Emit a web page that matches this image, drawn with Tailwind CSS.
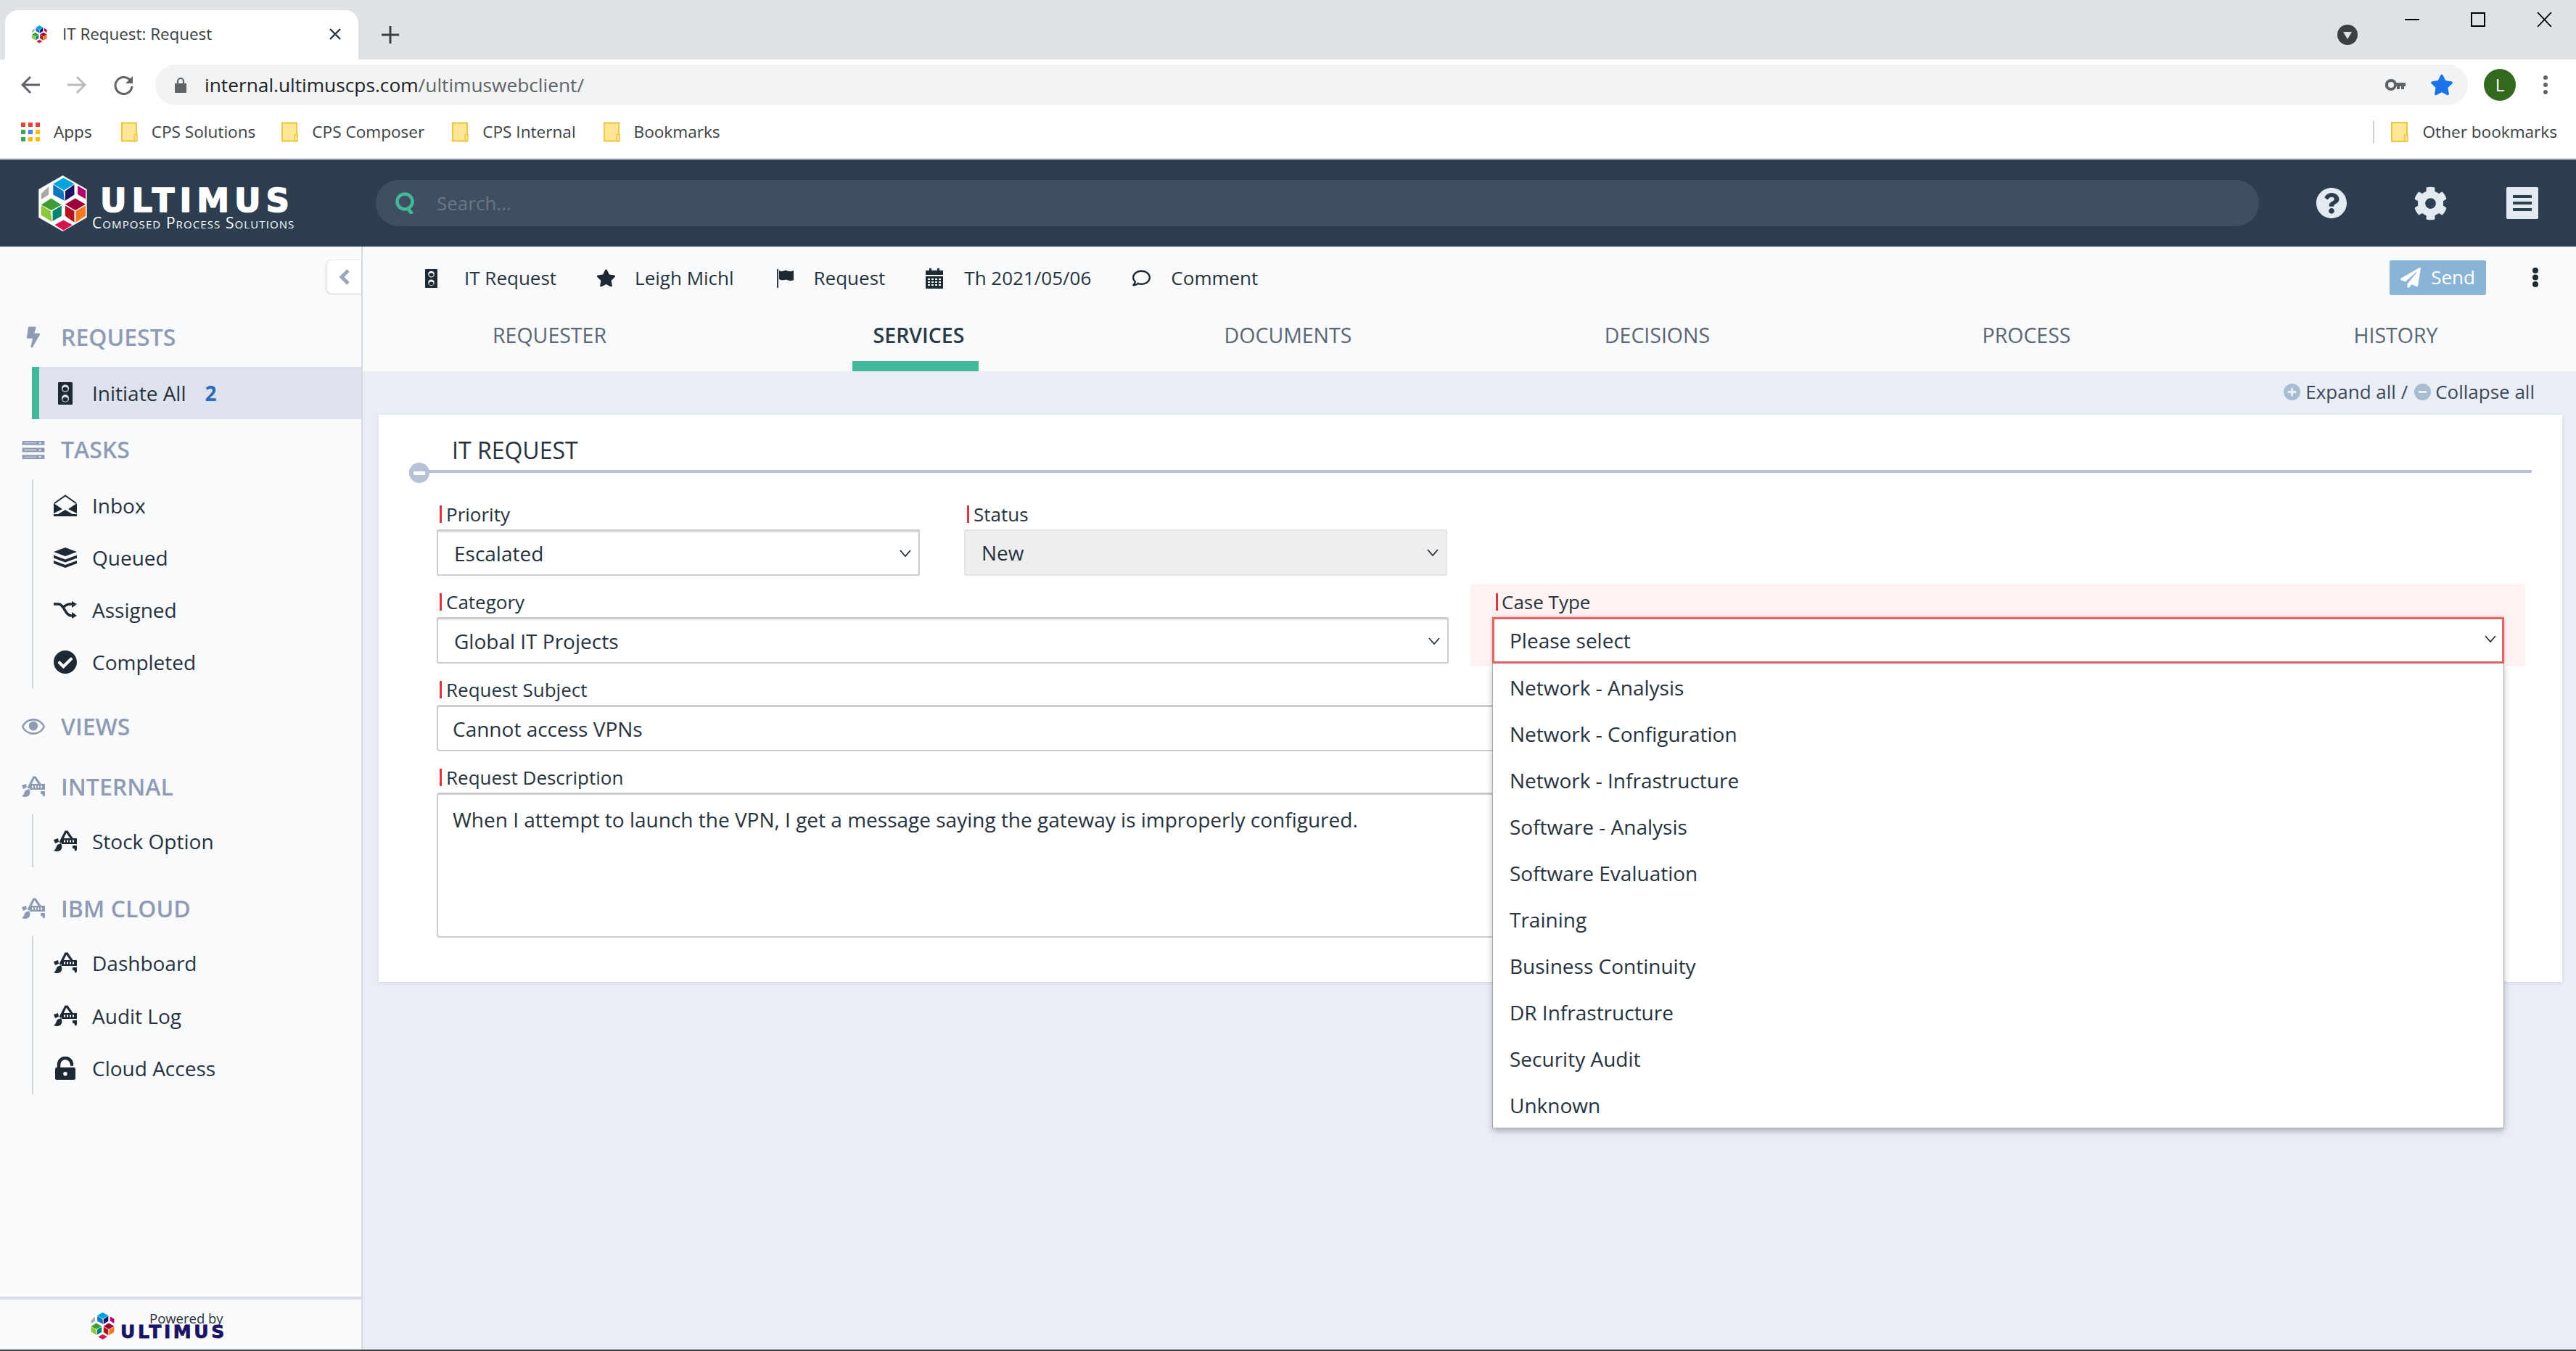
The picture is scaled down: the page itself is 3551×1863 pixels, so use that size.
<!DOCTYPE html>
<html lang="en">
<head>
  <meta charset="UTF-8" />
  <title>IT Request: Request</title>
  <script src="https://cdn.jsdelivr.net/npm/@tailwindcss/browser@4"></script>
</head>
<body class="w-[3551px] h-[1863px] overflow-hidden flex flex-col bg-[#e9eef6] font-['Open_Sans',sans-serif] text-[#27323e]">

  <!-- shared icons -->
  <svg class="hidden" aria-hidden="true">
    <symbol id="i-folder" viewBox="0 0 24 28"><path d="M1 1h21v26H1z" fill="#ffe596" stroke="#edc33f" stroke-width="2"/><path d="M19 18h4v9h-4z" fill="#ffe596" stroke="#edc33f" stroke-width="1.5"/></symbol>
    <symbol id="i-traffic" viewBox="0 0 20 20" preserveAspectRatio="none"><path fill="currentColor" fill-rule="evenodd" d="M1 0h18a1 1 0 0 1 1 1v18a1 1 0 0 1-1 1H1a1 1 0 0 1-1-1V1a1 1 0 0 1 1-1zm9 2.200c-3 0-5 1.400-5 3.300s2 3.300 5 3.300 5-1.400 5-3.300-2-3.300-5-3.300zm0 9c-3 0-5 1.400-5 3.300s2 3.300 5 3.300 5-1.400 5-3.300-2-3.300-5-3.300z"/><ellipse cx="10" cy="6.200" rx="3.600" ry="1.900" fill="currentColor"/><ellipse cx="10" cy="15.300" rx="3.600" ry="1.900" fill="currentColor"/></symbol>
    <symbol id="i-bolt" viewBox="0 0 320 512"><path fill="currentColor" d="M296 160H180.600l42.600-129.800C227.200 15 215.700 0 200 0H56C44 0 33.800 8.900 32.200 20.800l-32 240C-1.700 275.200 9.500 288 24 288h118.700L96.600 482.500c-3.600 15.200 8 29.500 23.300 29.500 8.400 0 16.400-4.400 20.800-12l176-304c9.300-15.900-2.200-36-20.700-36z"/></symbol>
    <symbol id="i-tasks" viewBox="0 0 32 26"><path fill="currentColor" fill-rule="evenodd" d="M0 0h32v6H0zm0 10h32v6H0zm0 10h32v6H0zM24 2v2h3V2zm0 10v2h3v-2zm0 10v2h3v-2zM3 2.500v1h17v-1zm0 10v1h17v-1zm0 10v1h17v-1z"/></symbol>
    <symbol id="i-inbox" viewBox="0 0 32 30"><path fill="none" stroke="currentColor" stroke-width="2" d="M1 12 16 1.500 31 12"/><path fill="currentColor" d="M0 12l12 8-12 6zM32 12l-12 8 12 6zM1 30l15-9 15 9z"/><path fill="currentColor" d="M0 27h32v3H0z"/></symbol>
    <symbol id="i-stack" viewBox="0 0 32 28"><path fill="currentColor" d="M16 0l16 6-16 6-16-6zM0 10.500l16 6 16-6v4l-16 6-16-6zM0 18l16 6 16-6v4l-16 6-16-6z"/></symbol>
    <symbol id="i-random" viewBox="0 0 32 24"><path fill="none" stroke="currentColor" stroke-width="3.500" d="M0 4h7c7 0 9 16 17 16h3M0 4M13 9c3-4 6-5 11-5h3"/><path fill="currentColor" d="M25 0l7 4-7 5zM25 15l7 5-7 4z"/></symbol>
    <symbol id="i-check" viewBox="8 8 496 496" preserveAspectRatio="none"><path fill="currentColor" d="M504 256c0 136.967-111.033 248-248 248S8 392.967 8 256 119.033 8 256 8s248 111.033 248 248zM227.314 387.314l184-184c6.248-6.248 6.248-16.379 0-22.627l-22.627-22.627c-6.248-6.249-16.379-6.249-22.628 0L216 308.118l-70.059-70.059c-6.248-6.248-16.379-6.248-22.628 0l-22.627 22.627c-6.248 6.248-6.248 16.379 0 22.627l104 104c6.249 6.249 16.379 6.249 22.628.001z"/></symbol>
    <symbol id="i-eye" viewBox="0 64 576 384" preserveAspectRatio="none"><path fill="currentColor" d="M572.520 241.400C518.290 135.590 410.930 64 288 64S57.680 135.640 3.480 241.410a32.350 32.350 0 0 0 0 29.190C57.710 376.410 165.070 448 288 448s230.320-71.640 284.520-177.410a32.350 32.350 0 0 0 0-29.190zM288 400c-110 0-200-60-240-144 40-84 130-144 240-144s200 60 240 144c-40 84-130 144-240 144z"/><circle cx="288" cy="240" r="112" fill="currentColor"/></symbol>
    <symbol id="i-tools" viewBox="0 0 32 30"><path fill="none" stroke="currentColor" stroke-width="3.200" d="M9 17 16.500 2h2L26 13"/><path fill="currentColor" fill-rule="evenodd" d="M11 11h21v8H11zm3 2.500v3h2v-3zm4 0v3h2v-3zm4 0v3h2v-3zm4 0v3h2v-3z"/><path fill="currentColor" d="M0 13l6-2 1 5-5 2zM10 18c-2 1-5 1-6 4-1 3-2 5-4 6 4 2 10 1 11-3 1-3 0-5-1-7zM26 21h6v6l-2 2-2-4h-2z"/></symbol>
    <symbol id="i-unlock" viewBox="0 0 28 32"><path fill="none" stroke="currentColor" stroke-width="4.500" stroke-linecap="round" d="M5 16v-5a9 9 0 0 1 18 0"/><path fill="currentColor" fill-rule="evenodd" d="M2 15h24a2 2 0 0 1 2 2v13a2 2 0 0 1-2 2H2a2 2 0 0 1-2-2V17a2 2 0 0 1 2-2zm12 6a2.800 2.800 0 1 0 0 5.600 2.800 2.800 0 0 0 0-5.600z"/></symbol>
    <symbol id="i-chev" viewBox="0 0 16 10"><path fill="none" stroke="currentColor" stroke-width="1.800" d="M1 1l7 8 7-8"/></symbol>
    <symbol id="i-hex" viewBox="100 60 200 232">
      <path fill="#fff" stroke="#fff" stroke-width="6" stroke-linejoin="round" d="M200 63l97 56v114l-97 56-97-56V119z"/>
      <path fill="#00a4dc" d="M203 70l45 25-43 27-45-27z"/><path fill="#0f75bc" d="M160 98l43 27 4 40-47-25z"/><path fill="#1b1464" d="M248 98v42l-38 25v-40z"/>
      <path fill="#3f9c35" d="M152 155l43 27-43 23-42-23z"/><path fill="#8dc63f" d="M110 185l40 23 5 44-45-27z"/><path fill="#00856f" d="M195 185v43l-37 22v-42z"/>
      <path fill="#9e0039" d="M252 155l43 25-43 25-42-25z"/><path fill="#b7121f" d="M210 185l38 23v47l-38-27z"/><path fill="#f47920" d="M295 185v43l-41 27v-47z"/>
      <path fill="#a7a9ac" d="M110 135l32-30v35l-32 20z"/><path fill="#b5006b" d="M262 102l33 20v36l-33-20z"/><path fill="#d7134a" d="M203 245l37 20-37 23-36-23z"/>
    </symbol>
  </svg>

  <!-- browser tab strip -->
  <div class="h-[82px] shrink-0 bg-[#dee1e6] flex items-end relative">
    <div class="ml-[7px] w-[487px] shrink-0 h-[68px] bg-white rounded-t-[18px] flex items-center pl-[35px] pb-[2px]">
      <svg class="w-[24px] h-[26px] shrink-0"><use href="#i-hex"/></svg>
      <span class="ml-[20px] w-[206px] text-[22.400px] text-[#3c4043] whitespace-nowrap">IT Request: Request</span>
      <svg class="ml-[162px] w-[16px] h-[16px] text-[#27323e] shrink-0" viewBox="0 0 16 16"><path d="M1 1l14 14M15 1 1 15" stroke="currentColor" stroke-width="2.400"/></svg>
    </div>
    <svg class="ml-[32px] mb-[22px] w-[24px] h-[24px] text-[#3c4043]" viewBox="0 0 24 24"><path d="M12 0v24M0 12h24" stroke="currentColor" stroke-width="3"/></svg>
    <div class="ml-auto flex items-start h-full">
      <svg class="mt-[34px] w-[28px] h-[28px]" viewBox="0 0 28 28"><circle cx="14" cy="14" r="14" fill="#3c4043"/><path d="M8 10h12l-6 10z" fill="#dee1e6"/></svg>
      <svg class="ml-[65px] mt-[26px] w-[20px] h-[2px]" viewBox="0 0 20 2"><path d="M0 0h20v2H0z" fill="#000"/></svg>
      <svg class="ml-[71px] mt-[17px] w-[20px] h-[20px]" viewBox="0 0 20 20"><path d="M1 1h18v18H1z" fill="none" stroke="#000" stroke-width="2"/></svg>
      <svg class="ml-[71px] mr-[33px] mt-[17px] w-[21px] h-[20px]" viewBox="0 0 21 20"><path d="M1 0l19 20M20 0 1 20" stroke="#000" stroke-width="1.800"/></svg>
    </div>
  </div>

  <!-- browser toolbar -->
  <div class="h-[64px] shrink-0 bg-white flex items-center pt-[6px]">
    <svg class="ml-[29px] w-[26px] h-[26px] text-[#5f6368]" viewBox="0 0 26 26"><path d="M26 13H3M13 2 2 13l11 11" fill="none" stroke="currentColor" stroke-width="3"/></svg>
    <svg class="ml-[38px] w-[26px] h-[26px] text-[#babcbe]" viewBox="0 0 26 26"><path d="M0 13h23M13 2l11 11-11 11" fill="none" stroke="currentColor" stroke-width="3"/></svg>
    <svg class="ml-[38px] w-[27px] h-[27px] text-[#5f6368]" viewBox="0 0 27 27"><path d="M23 7.500A11.500 11.500 0 1 0 25 15" fill="none" stroke="currentColor" stroke-width="3"/><path d="M26 1v10H16z" fill="currentColor"/></svg>
    <div class="ml-[30px] w-[3188px] h-[56px] rounded-full bg-[#f1f3f4] flex items-center">
      <svg class="ml-[26px] w-[18px] h-[22px] text-[#5f6368]" viewBox="0 0 18 22"><path d="M5 9V6a4 4 0 0 1 8 0v3" fill="none" stroke="currentColor" stroke-width="2.200"/><path d="M1 9h16v12a1 1 0 0 1-1 1H2a1 1 0 0 1-1-1z" fill="currentColor"/></svg>
      <span class="ml-[24px] text-[26.300px] leading-none text-[#202124] whitespace-nowrap">internal.ultimuscps.com<span class="text-[#5f6368]">/ultimuswebclient/</span></span>
      <svg class="ml-auto w-[28px] h-[16px] text-[#5f6368]" viewBox="0 0 28 16"><path fill="currentColor" fill-rule="evenodd" d="M8 0a8 8 0 0 1 7.500 5H28v5h-2v4h-4v-4h-2v4h-4v-4h-.5A8 8 0 1 1 8 0zm0 4a4 4 0 1 0 0 8 4 4 0 0 0 0-8z"/></svg>
      <svg class="ml-[34px] mr-[20px] w-[32px] h-[30px] text-[#1a73e8]" viewBox="0 0 576 512"><path fill="currentColor" d="M259.300 17.800L194 150.200 47.900 171.500c-26.200 3.800-36.700 36.100-17.700 54.600l105.700 103-25 145.500c-4.500 26.300 23.200 46 46.400 33.700L288 439.600l130.700 68.700c23.200 12.200 50.900-7.400 46.400-33.700l-25-145.500 105.700-103c19-18.500 8.500-50.800-17.700-54.600L382 150.200 316.700 17.800c-11.700-23.600-45.600-23.900-57.400 0z"/></svg>
    </div>
    <div class="ml-[22px] w-[44px] h-[44px] rounded-full bg-[#33691e] text-white text-[24px] flex items-center justify-center">L</div>
    <svg class="ml-[38px] w-[6px] h-[26px] text-[#5f6368]" viewBox="0 0 6 26"><circle cx="3" cy="3" r="3" fill="currentColor"/><circle cx="3" cy="13" r="3" fill="currentColor"/><circle cx="3" cy="23" r="3" fill="currentColor"/></svg>
  </div>

  <!-- bookmarks bar -->
  <div class="h-[74px] shrink-0 bg-white border-b-2 border-[#dadce0] flex items-center text-[22.600px] text-[#3c4043] whitespace-nowrap">
    <svg class="ml-[29px] w-[26px] h-[26px]" viewBox="0 0 26 26"><path fill="#ea4335" d="M0 0h6v6H0zM10 0h6v6h-6zM20 0h6v6h-6z"/><path fill="#34a853" d="M0 10h6v6H0z"/><path fill="#4285f4" d="M10 10h6v6h-6z"/><path fill="#fbbc04" d="M20 10h6v6h-6z"/><path fill="#34a853" d="M0 20h6v6H0z"/><path fill="#fbbc04" d="M10 20h6v6h-6zM20 20h6v6h-6z"/></svg>
    <span class="ml-[19px]">Apps</span>
    <svg class="ml-[40px] w-[23px] h-[28px]"><use href="#i-folder"/></svg><span class="ml-[19px]">CPS Solutions</span>
    <svg class="ml-[36px] w-[23px] h-[28px]"><use href="#i-folder"/></svg><span class="ml-[19px]">CPS Composer</span>
    <svg class="ml-[38px] w-[23px] h-[28px]"><use href="#i-folder"/></svg><span class="ml-[19px]">CPS Internal</span>
    <svg class="ml-[38px] w-[23px] h-[28px]"><use href="#i-folder"/></svg><span class="ml-[19px]">Bookmarks</span>
    <div class="ml-auto w-[2px] h-[32px] bg-[#d0d0d0]"></div>
    <svg class="ml-[23px] w-[24px] h-[28px]"><use href="#i-folder"/></svg><span class="ml-[20px] mr-[26px]">Other bookmarks</span>
  </div>

  <!-- app header -->
  <header class="h-[120px] shrink-0 bg-[#2c3e50] flex items-center">
    <svg class="ml-[53px] w-[67px] h-[77px] shrink-0"><use href="#i-hex"/></svg>
    <div class="ml-[18px] mt-[14px] w-[266px] flex flex-col text-white">
      <span class="font-['DejaVu_Sans'] font-bold text-[45px] leading-[36px] tracking-[7px] [-webkit-text-stroke:1.500px_white]">ULTIMUS</span>
      <span class="ml-[-11px] mt-[3px] [font-variant:small-caps] text-[21px] leading-[18px] tracking-[1.100px] whitespace-nowrap">Composed Process Solutions</span>
    </div>
    <div class="ml-[114px] w-[2596px] h-[64px] rounded-full bg-[#3f4e60] flex items-center">
      <svg class="ml-[27px] w-[27px] h-[30px] text-[#41b899]" viewBox="0 0 27 30"><circle cx="13" cy="13" r="10.500" fill="none" stroke="currentColor" stroke-width="4.500"/><path d="M17 22l6 8" stroke="currentColor" stroke-width="5"/></svg>
      <span class="ml-[30px] text-[26px] text-[#6b7785]">Search...</span>
    </div>
    <svg class="ml-[79px] w-[42px] h-[42px] text-[#e3eaf1]" viewBox="8 8 496 496"><path fill="currentColor" d="M504 256c0 136.997-111.043 248-248 248S8 392.997 8 256C8 119.083 119.043 8 256 8s248 111.083 248 248zM262.655 90c-54.497 0-89.255 22.957-116.549 63.758-3.536 5.286-2.353 12.415 2.715 16.258l34.699 26.310c5.205 3.947 12.621 3.008 16.665-2.122 17.864-22.658 30.113-35.797 57.303-35.797 20.429 0 45.698 13.148 45.698 32.958 0 14.976-12.363 22.667-32.534 33.976C247.128 238.528 216 254.941 216 296v4c0 6.627 5.373 12 12 12h56c6.627 0 12-5.373 12-12v-1.333c0-28.462 83.186-29.647 83.186-106.667 0-58.002-60.165-102-116.531-102zM256 338c-25.365 0-46 20.635-46 46 0 25.364 20.635 46 46 46s46-20.636 46-46c0-25.365-20.635-46-46-46z"/></svg>
    <svg class="ml-[92px] w-[47px] h-[47px] text-[#e3eaf1]" viewBox="0 0 512 512"><path fill="currentColor" d="M487.400 315.700l-42.600-24.600c4.300-23.200 4.300-47 0-70.200l42.600-24.600c4.900-2.800 7.100-8.600 5.500-14-11.100-35.600-30-67.800-54.700-94.600-3.800-4.100-10-5.100-14.800-2.300L380.800 110c-17.900-15.400-38.500-27.300-60.800-35.100V25.800c0-5.600-3.900-10.500-9.400-11.700-36.700-8.200-74.300-7.800-109.200 0-5.500 1.200-9.400 6.100-9.400 11.700V75c-22.200 7.900-42.800 19.800-60.800 35.100L88.700 85.500c-4.900-2.800-11-1.900-14.800 2.300-24.700 26.700-43.600 58.900-54.700 94.600-1.700 5.400.6 11.200 5.500 14L67.300 221c-4.300 23.200-4.300 47 0 70.200l-42.600 24.600c-4.900 2.800-7.100 8.600-5.500 14 11.100 35.600 30 67.800 54.700 94.600 3.800 4.100 10 5.100 14.800 2.300l42.600-24.600c17.900 15.400 38.500 27.300 60.800 35.100v49.200c0 5.600 3.900 10.500 9.400 11.700 36.700 8.200 74.300 7.800 109.200 0 5.500-1.200 9.400-6.100 9.400-11.700v-49.200c22.200-7.900 42.800-19.800 60.800-35.100l42.600 24.600c4.900 2.800 11 1.900 14.800-2.300 24.700-26.700 43.600-58.900 54.700-94.600 1.500-5.500-.7-11.300-5.600-14.100zM256 336c-44.100 0-80-35.900-80-80s35.900-80 80-80 80 35.900 80 80-35.900 80-80 80z"/></svg>
    <div class="ml-[81px] w-[44px] h-[44px] rounded-[2px] bg-[#e3eaf1] flex flex-col justify-center gap-[5px] px-[9px]">
      <div class="h-[4px] bg-[#2c3e50]"></div><div class="h-[4px] bg-[#2c3e50]"></div><div class="h-[4px] bg-[#2c3e50]"></div>
    </div>
  </header>

  <div class="flex-1 min-h-0 flex border-b-2 border-[#3c4043]">
    <!-- sidebar -->
    <aside class="w-[500px] shrink-0 bg-[#f9fafc] border-r-2 border-[#d5d9e0] flex flex-col relative">
      <div class="absolute right-0 top-[18px] w-[48px] h-[47px] bg-white rounded-l-[8px] border border-r-0 border-[#eceef2] shadow-[-1px_1px_3px_rgba(0,0,0,0.12)] flex items-center justify-center">
        <svg class="w-[16px] h-[24px] text-[#9aa5c1]" viewBox="0 0 16 24"><path d="M13 3 4 12l9 9" fill="none" stroke="currentColor" stroke-width="5"/></svg>
      </div>

      <div class="flex items-center h-[40px] mt-[105px] pl-[37px] text-[#8f9bb3] text-[32px] font-semibold">
        <svg class="w-[18px] h-[30px]"><use href="#i-bolt"/></svg><span class="ml-[29px]">REQUESTS</span>
      </div>
      <div class="mt-[21px] ml-[44px] h-[72px] bg-[#dde2ec] border-l-[10px] border-[#41b899] flex items-center text-[28px]">
        <svg class="ml-[26px] w-[20px] h-[31px] text-[#1f2933]"><use href="#i-traffic"/></svg>
        <span class="ml-[27px]">Initiate All</span>
        <span class="ml-[26px] font-bold text-[#2f6cb8]">2</span>
      </div>

      <div class="flex items-center h-[40px] mt-[22px] pl-[30px] text-[#8f9bb3] text-[32px] font-semibold">
        <svg class="w-[32px] h-[25px]"><use href="#i-tasks"/></svg><span class="ml-[22px]">TASKS</span>
      </div>
      <ul class="mt-[21px] ml-[44px] h-[288px] border-l-2 border-[#cfd3da] pl-[28px] flex flex-col text-[28px]">
        <li class="h-[72px] flex items-center"><svg class="w-[32px] h-[30px] text-[#1f2933]"><use href="#i-inbox"/></svg><span class="ml-[21px]">Inbox</span></li>
        <li class="h-[72px] flex items-center"><svg class="w-[32px] h-[28px] text-[#1f2933]"><use href="#i-stack"/></svg><span class="ml-[21px]">Queued</span></li>
        <li class="h-[72px] flex items-center"><svg class="w-[32px] h-[24px] text-[#1f2933]"><use href="#i-random"/></svg><span class="ml-[21px]">Assigned</span></li>
        <li class="h-[72px] flex items-center"><svg class="w-[32px] h-[32px] text-[#1f2933]"><use href="#i-check"/></svg><span class="ml-[21px]">Completed</span></li>
      </ul>

      <div class="flex items-center h-[40px] mt-[33px] pl-[30px] text-[#8f9bb3] text-[32px] font-semibold">
        <svg class="w-[32px] h-[22px]"><use href="#i-eye"/></svg><span class="ml-[22px]">VIEWS</span>
      </div>
      <div class="flex items-center h-[40px] mt-[43px] pl-[30px] text-[#8f9bb3] text-[32px] font-semibold">
        <svg class="w-[32px] h-[30px]"><use href="#i-tools"/></svg><span class="ml-[22px]">INTERNAL</span>
      </div>
      <ul class="mt-[18px] ml-[44px] h-[73px] border-l-2 border-[#cfd3da] pl-[28px] text-[28px]">
        <li class="h-[74px] flex items-center"><svg class="w-[32px] h-[30px] text-[#1f2933]"><use href="#i-tools"/></svg><span class="ml-[21px]">Stock Option</span></li>
      </ul>
      <div class="flex items-center h-[40px] mt-[37px] pl-[30px] text-[#8f9bb3] text-[32px] font-semibold">
        <svg class="w-[32px] h-[30px]"><use href="#i-tools"/></svg><span class="ml-[22px]">IBM CLOUD</span>
      </div>
      <ul class="mt-[18px] ml-[44px] h-[218px] border-l-2 border-[#cfd3da] pl-[28px] text-[28px]">
        <li class="h-[74px] flex items-center"><svg class="w-[32px] h-[30px] text-[#1f2933]"><use href="#i-tools"/></svg><span class="ml-[21px]">Dashboard</span></li>
        <li class="h-[72px] flex items-center"><svg class="w-[32px] h-[30px] text-[#1f2933]"><use href="#i-tools"/></svg><span class="ml-[21px]">Audit Log</span></li>
        <li class="h-[72px] flex items-center"><svg class="w-[28px] h-[32px] ml-[2px] text-[#1f2933]"><use href="#i-unlock"/></svg><span class="ml-[23px]">Cloud Access</span></li>
      </ul>

      <div class="mt-auto h-[73px] border-t-4 border-[#d8dce4] relative flex items-center pl-[123px]">
        <svg class="w-[36px] h-[40px] mt-[2px]"><use href="#i-hex"/></svg>
        <div class="ml-[7px] flex flex-col mt-[2px]">
          <span class="text-[18.500px] leading-[19px] ml-[40px] text-[#27323e]">Powered by</span>
          <span class="font-['DejaVu_Sans'] font-bold text-[25px] leading-[20px] tracking-[3.600px] [-webkit-text-stroke:0.800px_#1b1464] text-[#1b1464]">ULTIMUS</span>
        </div>
      </div>
    </aside>

    <!-- main column -->
    <main class="flex-1 min-w-0 flex flex-col">
      <div class="bg-[#f9fafc] h-[172px] shrink-0 flex flex-col relative">
        <div class="h-[87px] flex items-center text-[26px] whitespace-nowrap">
          <svg class="ml-[86px] w-[17px] h-[26px] text-[#1f2933]"><use href="#i-traffic"/></svg>
          <span class="ml-[37px]">IT Request</span>
          <svg class="ml-[55px] w-[27px] h-[25px] text-[#1f2933]" viewBox="0 0 576 512"><path fill="currentColor" d="M259.300 17.800L194 150.200 47.900 171.500c-26.200 3.800-36.700 36.100-17.700 54.600l105.700 103-25 145.500c-4.500 26.300 23.200 46 46.400 33.700L288 439.600l130.700 68.700c23.200 12.200 50.900-7.400 46.400-33.700l-25-145.500 105.700-103c19-18.500 8.500-50.800-17.700-54.600L382 150.200 316.700 17.800c-11.700-23.600-45.600-23.900-57.400 0z"/></svg>
          <span class="ml-[26px]">Leigh Michl</span>
          <svg class="ml-[59px] w-[24px] h-[26px] text-[#1f2933]" viewBox="0 0 24 26"><path d="M1 0v26" stroke="currentColor" stroke-width="1.800"/><path d="M3 2c5 3 7-1 10 0s6 2 10 0v13c-4 2-6 1-9 0s-6 2-11-1z" fill="currentColor"/></svg>
          <span class="ml-[27px]">Request</span>
          <svg class="ml-[56px] w-[24px] h-[28px] text-[#1f2933]" viewBox="0 0 24 28"><path fill="currentColor" fill-rule="evenodd" d="M5 0h3v3h8V0h3v3h5v6H0V3h5zM0 11h24v17H0zm3 3v2h3v-2zm5 0v2h3v-2zm5 0v2h3v-2zm5 0v2h3v-2zM3 18v2h3v-2zm5 0v2h3v-2zm5 0v2h3v-2zm5 0v2h3v-2zM3 22v2h3v-2zm5 0v2h3v-2zm5 0v2h3v-2zm5 0v2h3v-2z"/></svg>
          <span class="ml-[29px]">Th 2021/05/06</span>
          <svg class="ml-[56px] w-[27px] h-[25px] text-[#1f2933]" viewBox="0 0 512 512"><path fill="currentColor" d="M256 32C114.600 32 0 125.100 0 240c0 47.600 19.900 91.200 52.900 126.300C38 405.700 7 439.100 6.500 439.500c-6.600 7-8.400 17.200-4.600 26S14.400 480 24 480c61.500 0 110-25.700 139.100-46.300C192 442.800 223.200 448 256 448c141.400 0 256-93.100 256-208S397.400 32 256 32zm0 368c-26.700 0-53.100-4.100-78.400-12.100l-22.700-7.200-19.500 13.800c-14.300 10.100-33.900 21.400-57.500 29 7.300-12.100 14.400-25.700 19.900-40.200l10.600-28.100-20.600-21.800C69.700 314.100 48 282.200 48 240c0-88.200 93.300-160 208-160s208 71.800 208 160-93.300 160-208 160z"/></svg>
          <span class="ml-[27px]">Comment</span>
          <div class="ml-auto w-[133px] h-[48px] mt-[-2px] rounded-[3px] bg-[#8ab4d6] text-white flex items-center justify-center gap-[14px]">
            <svg class="w-[28px] h-[28px]" viewBox="0 0 512 512"><path fill="currentColor" d="M476 3.200L12.500 270.600c-18.100 10.400-15.800 35.600 2.200 43.200L121 358.400l287.300-253.200c5.500-4.900 13.300 2.600 8.600 8.300L176 407v80.500c0 23.600 28.500 32.900 42.500 15.800L282 426l124.600 52.200c14.200 6 30.400-2.900 33-18.200l72-432C515 7.800 493.300-6.800 476 3.200z"/></svg>
            <span>Send</span>
          </div>
          <svg class="ml-[64px] mr-[52px] mt-[-2px] w-[8px] h-[27px] text-[#1f2933]" viewBox="0 0 8 27"><circle cx="4" cy="4" r="4" fill="currentColor"/><circle cx="4" cy="13.500" r="4" fill="currentColor"/><circle cx="4" cy="23" r="4" fill="currentColor"/></svg>
        </div>
        <nav class="flex-1 flex items-stretch text-[28.500px] font-medium text-[#5b6672] whitespace-nowrap">
          <a class="w-[509px] shrink-0 ml-[3px] flex justify-center pt-[14px]">REQUESTER</a>
          <a class="w-[509px] shrink-0 flex justify-center pt-[14px] relative font-semibold text-[#2a3a47]">SERVICES<span class="absolute bottom-0 left-[163px] w-[174px] h-[14px] bg-[#41b899]"></span></a>
          <a class="w-[509px] shrink-0 flex justify-center pt-[14px]">DOCUMENTS</a>
          <a class="w-[509px] shrink-0 flex justify-center pt-[14px]">DECISIONS</a>
          <a class="w-[509px] shrink-0 flex justify-center pt-[14px]">PROCESS</a>
          <a class="w-[509px] shrink-0 flex justify-center pt-[14px]">HISTORY</a>
        </nav>
      </div>

      <div class="h-[60px] shrink-0 flex items-center justify-end pb-[4px] pr-[57px] text-[26px] text-[#3c4858] whitespace-nowrap">
        <svg class="w-[23px] h-[23px] mr-[7px] text-[#a9bdd1]" viewBox="0 0 24 24"><circle cx="12" cy="12" r="12" fill="currentColor"/><path d="M6 12h12M12 6v12" stroke="#e9eef6" stroke-width="3"/></svg>
        <span>Expand all /</span>
        <svg class="w-[23px] h-[23px] ml-[9px] mr-[6px] text-[#a9bdd1]" viewBox="0 0 24 24"><circle cx="12" cy="12" r="12" fill="currentColor"/><path d="M6 12h12" stroke="#e9eef6" stroke-width="3"/></svg>
        <span>Collapse all</span>
      </div>

      <section class="ml-[22px] mr-[19px] h-[782px] bg-white shadow-[0_1px_4px_rgba(0,0,0,0.12)] flex flex-col">
        <h2 class="pt-[30px] pl-[101px] text-[32px] leading-[38px] font-normal">IT REQUEST</h2>
        <div class="relative mt-[8px] ml-[42px] mr-[42px] h-[4px] bg-[#b4c1d6]">
          <div class="absolute left-0 top-[-10px] w-[28px] h-[28px] rounded-full bg-[#b4c1d6] flex items-center justify-center"><div class="w-[16px] h-[5px] bg-white rounded-[1px]"></div></div>
        </div>

        <div class="mt-[45px] ml-[80px] w-[2850px] flex flex-col gap-[24px] text-[28px]">
          <div class="flex gap-[61px]">
            <div class="w-[666px]">
              <div class="h-[24px] mb-[9px] flex items-center text-[26px] leading-none"><span class="ml-[4px] w-[3px] h-[24px] bg-[#d9363e]"></span><span class="ml-[6px]">Priority</span></div>
              <div class="h-[64px] border-2 border-t-[3px] border-[#cccccc] rounded-[2px] bg-white flex items-center pl-[22px] pr-[10px] shadow-[inset_0_2px_2px_rgba(0,0,0,0.05)]"><span>Escalated</span><svg class="ml-auto w-[16px] h-[10px]"><use href="#i-chev"/></svg></div>
            </div>
            <div class="w-[666px]">
              <div class="h-[24px] mb-[9px] flex items-center text-[26px] leading-none"><span class="ml-[4px] w-[3px] h-[24px] bg-[#d9363e]"></span><span class="ml-[6px]">Status</span></div>
              <div class="h-[64px] border-2 border-[#e4e4e4] rounded-[2px] bg-[#eeeeee] flex items-center pl-[22px] pr-[10px]"><span>New</span><svg class="ml-auto w-[16px] h-[10px]"><use href="#i-chev"/></svg></div>
            </div>
          </div>

          <div class="flex gap-[60px]">
            <div class="w-[1395px]">
              <div class="h-[24px] mb-[9px] flex items-center text-[26px] leading-none"><span class="ml-[4px] w-[3px] h-[24px] bg-[#d9363e]"></span><span class="ml-[6px]">Category</span></div>
              <div class="h-[64px] border-2 border-t-[3px] border-[#cccccc] rounded-[2px] bg-white flex items-center pl-[22px] pr-[10px] shadow-[inset_0_2px_2px_rgba(0,0,0,0.05)]"><span>Global IT Projects</span><svg class="ml-auto w-[16px] h-[10px]"><use href="#i-chev"/></svg></div>
            </div>
            <div class="w-[1395px] relative z-10">
              <div class="absolute left-[-30px] right-[-29px] top-[-13px] bottom-[-4px] bg-[#fef3f2]"></div>
              <div class="relative h-[24px] mb-[9px] flex items-center text-[26px] leading-none"><span class="ml-[5px] w-[3px] h-[24px] bg-[#d9363e]"></span><span class="ml-[5px]">Case Type</span></div>
              <div class="relative h-[64px] border-[3px] border-[#e06666] bg-white flex items-center pl-[21px] pr-[8px] shadow-[0_0_4px_rgba(224,102,102,0.5)]"><span>Please select</span><svg class="ml-auto w-[16px] h-[10px] mb-[4px]"><use href="#i-chev"/></svg></div>
              <ul class="absolute left-0 right-0 top-[97px] h-[641px] bg-white border border-t-0 border-[#aaaaaa] shadow-[0_4px_8px_rgba(0,0,0,0.25)] pl-[23px] pt-[1px]">
                <li class="h-[64px] flex items-center">Network - Analysis</li>
                <li class="h-[64px] flex items-center">Network - Configuration</li>
                <li class="h-[64px] flex items-center">Network - Infrastructure</li>
                <li class="h-[64px] flex items-center">Software - Analysis</li>
                <li class="h-[64px] flex items-center">Software Evaluation</li>
                <li class="h-[64px] flex items-center">Training</li>
                <li class="h-[64px] flex items-center">Business Continuity</li>
                <li class="h-[64px] flex items-center">DR Infrastructure</li>
                <li class="h-[64px] flex items-center">Security Audit</li>
                <li class="h-[64px] flex items-center">Unknown</li>
              </ul>
            </div>
          </div>

          <div>
            <div class="h-[24px] mb-[9px] flex items-center text-[26px] leading-none"><span class="ml-[4px] w-[3px] h-[24px] bg-[#d9363e]"></span><span class="ml-[6px]">Request Subject</span></div>
            <input type="text" value="Cannot access VPNs" class="block w-full h-[64px] border-2 border-t-[3px] border-[#cccccc] rounded-[4px] bg-white pl-[20px] outline-none" />
          </div>

          <div>
            <div class="h-[24px] mb-[9px] flex items-center text-[26px] leading-none"><span class="ml-[4px] w-[3px] h-[24px] bg-[#d9363e]"></span><span class="ml-[6px]">Request Description</span></div>
            <textarea class="block w-full h-[200px] border-2 border-t-[3px] border-[#cccccc] rounded-[4px] bg-white pl-[20px] pt-[13px] outline-none resize-none">When I attempt to launch the VPN, I get a message saying the gateway is improperly configured.</textarea>
          </div>
        </div>
      </section>
    </main>
  </div>
</body>
</html>
